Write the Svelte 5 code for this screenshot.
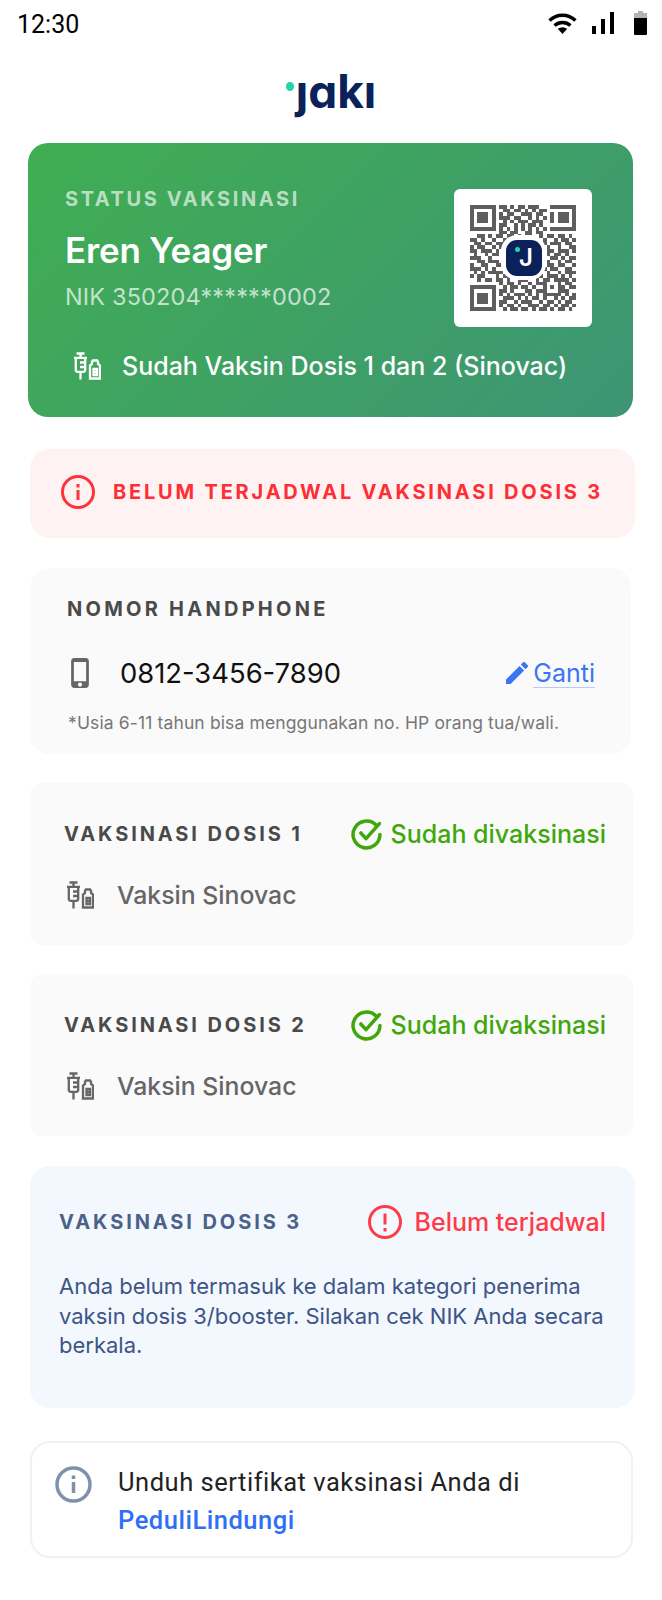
<script lang="ts">
  const doses = [{ title: "VAKSINASI DOSIS 1" }, { title: "VAKSINASI DOSIS 2" }];

  // rough copy of the qr modules, the middle is hidden by the logo
  const qrRows = [
    "11111110110101101110001111111",
    "10000010011011010101100000 01",
    "10111010101100111011001011101",
    "10111010111011001010101011101",
    "10111010010101110111001011101",
    "10000010110010101101000000 01",
    "11111110101010101010101111111",
    "00000000110110011011000000000",
    "00110101101101011001011011010",
    "11010010010110100110100101101",
    "01101101110000000001101110110",
    "10110010100000000000010010011",
    "11011101000000000000011011101",
    "01001011000000000000010110100",
    "11100100000000000000001101011",
    "00110111000000000000010010110",
    "10011001100000000000011011001",
    "11101010010000000001101100110",
    "01010111101101010110010010111",
    "10110001011010011101011101010",
    "00101101101001110010110111101",
    "00000000101101001011100010110",
    "11111110010110110100101011011",
    "10000010110100011011100011100",
    "10111010101011101010111110101",
    "10111010011101010110100101011",
    "10111010110010111001011010110",
    "10000010101101001110110101101",
    "11111110010110110101101011010",
  ];

  const qrCells = qrRows.flatMap((row, y) =>
    row.split("").map((c, x) => ({ x, y, on: c === "1" })).filter((c) => c.on),
  );
</script>

{#snippet vaccine()}
  <svg class="vaccine" viewBox="0 0 28 28" fill="none" stroke="currentColor" stroke-width="2.300">
    <path d="M3.500 1.500h8M7.500 1.500v4M1 5.800h13M2.800 5.800v12a2 2 0 0 0 2 2h5.400a2 2 0 0 0 2-2v-12M7.500 19.800v7.700M7 10.500h5M7 15h5" />
    <path d="M19 8.500h6M19 8.500v3.500l-2 1.500V26.500h10V13.500l-2-1.500V8.500M20.500 17h3.500v6h-3.500zM20.500 20h3.500" />
  </svg>
{/snippet}

{#snippet checkIcon()}
  <svg class="mark" viewBox="0 0 30 30" fill="none" stroke="#3fa70b" stroke-width="3.400" stroke-linecap="round" stroke-linejoin="round">
    <path d="M24.200 5.800A13 13 0 1 0 28 15" />
    <path d="M9.500 13.500l5 5.500L27.500 4.500" />
  </svg>
{/snippet}

<div class="page">
  <div class="statusbar">
    <span class="time">12:30</span>
    <div class="sys">
      <svg class="wifi" viewBox="0 0 29 21" fill="none" stroke="#000" stroke-width="3.400">
        <path d="M1.500 7.500c7.500-7 18.500-7 26 0" />
        <path d="M6.500 12.500c4.700-4 11.300-4 16 0" />
        <path d="M9.800 15.800c3-2 6.400-2 9.400 0L14.500 21z" fill="#000" stroke="none" />
      </svg>
      <svg class="signal" viewBox="0 0 22 22" fill="#000">
        <rect x="0" y="14" width="4" height="8" />
        <rect x="9" y="7" width="4" height="15" />
        <rect x="18" y="0" width="4" height="22" />
      </svg>
      <svg class="battery" viewBox="0 0 13 24">
        <path d="M4 0h5v2h4v6H0V2h4z" fill="#b3b3b3" />
        <path d="M0 7h13v16a1 1 0 0 1-1 1H1a1 1 0 0 1-1-1z" fill="#000" />
      </svg>
    </div>
  </div>

  <div class="logo-row">
    <div class="logo">
      <span class="logo-dot"></span>
      <span class="logo-text">ȷakı</span>
    </div>
  </div>

  <section class="vax-card">
    <div class="vax-top">
      <div>
        <div class="vax-label">STATUS VAKSINASI</div>
        <div class="vax-name">Eren Yeager</div>
        <div class="vax-nik">NIK 350204******0002</div>
      </div>
      <div class="qr">
        <svg viewBox="0 0 29 29" shape-rendering="crispEdges" fill="#5e5e5e">
          {#each qrCells as c}
            <rect x={c.x} y={c.y} width="1" height="1" />
          {/each}
        </svg>
        <div class="qr-ring">
          <div class="qr-logo">
            <span class="qr-dot"></span>
            <span class="qr-j">J</span>
          </div>
        </div>
      </div>
    </div>
    <div class="vax-bottom">
      {@render vaccine()}
      <span>Sudah Vaksin Dosis 1 dan 2 (Sinovac)</span>
    </div>
  </section>

  <section class="alert">
    <svg class="alert-icon" viewBox="0 0 34 34" fill="none" stroke="#ff3139" stroke-width="3">
      <circle cx="17" cy="17" r="15.500" />
      <path d="M17 15v10M17 9v3.500" />
    </svg>
    <span>BELUM TERJADWAL VAKSINASI DOSIS 3</span>
  </section>

  <section class="phone-card">
    <div class="head wide">NOMOR HANDPHONE</div>
    <div class="phone-row">
      <svg class="phone-icon" viewBox="5 1 13 22" fill="#666">
        <path d="M15.500 1h-8A2.500 2.500 0 0 0 5 3.500v17A2.500 2.500 0 0 0 7.500 23h8a2.500 2.500 0 0 0 2.500-2.500v-17A2.500 2.500 0 0 0 15.500 1zm-4 21c-.83 0-1.500-.67-1.500-1.500s.67-1.500 1.500-1.500 1.500.67 1.500 1.500-.67 1.500-1.500 1.500zm4.500-4H7V4h9v14z" />
      </svg>
      <span class="phone-num">0812-3456-7890</span>
      <span class="ganti">
        <svg viewBox="3 3 18 18" fill="#3b74f5">
          <path d="M3 17.250V21h3.750L17.810 9.940l-3.750-3.750L3 17.250zM20.710 7.040a1 1 0 0 0 0-1.410l-2.340-2.340a1 1 0 0 0-1.410 0l-1.830 1.830 3.750 3.750 1.830-1.830z" />
        </svg>
        <span class="ganti-link">Ganti</span>
      </span>
    </div>
    <p class="note">*Usia 6-11 tahun bisa menggunakan no. HP orang tua/wali.</p>
  </section>

  {#each doses as d}
    <section class="dose">
      <div class="dose-head">
        <span class="head">{d.title}</span>
        <span class="done">
          {@render checkIcon()}
          Sudah divaksinasi
        </span>
      </div>
      <div class="dose-vac">
        {@render vaccine()}
        <span>Vaksin Sinovac</span>
      </div>
    </section>
  {/each}

  <section class="dose3">
    <div class="dose-head">
      <span class="head blue">VAKSINASI DOSIS 3</span>
      <span class="pending">
        <svg class="mark" viewBox="0 0 34 34" fill="none" stroke="#ff3b47" stroke-width="3">
          <circle cx="17" cy="17" r="15.500" />
          <path d="M17 8.500v11M17 23v3.500" />
        </svg>
        Belum terjadwal
      </span>
    </div>
    <p>Anda belum termasuk ke dalam kategori penerima vaksin dosis 3/booster. Silakan cek NIK Anda secara berkala.</p>
  </section>

  <section class="info">
    <svg class="info-icon" viewBox="0 0 37 37" fill="none" stroke="#8091ae" stroke-width="3.500">
      <circle cx="18.500" cy="18.500" r="16.500" />
      <path d="M18.500 16v11M18.500 9.500v3.500" />
    </svg>
    <div class="info-text">
      Unduh sertifikat vaksinasi Anda di<br />
      <span class="info-link">PeduliLindungi</span>
    </div>
  </section>
</div>

<style>
  :global(body) {
    margin: 0;
    background: #fff;
  }

  .page {
    width: 662px;
    height: 1600px;
    overflow: hidden;
    font-family: Inter, "Noto Sans", sans-serif;
    color: #222;
  }

  .statusbar {
    height: 48px;
    display: flex;
    justify-content: space-between;
    align-items: center;
    padding: 0 15px 0 17px;
  }

  .time {
    font-family: Roboto, sans-serif;
    font-size: 25px;
    color: #000;
  }

  .sys {
    display: flex;
    align-items: center;
    gap: 15px;
    margin-top: -2px;
  }

  .wifi {
    width: 29px;
    height: 21px;
  }

  .signal {
    width: 22px;
    height: 22px;
  }

  .battery {
    width: 13px;
    height: 24px;
    margin-left: 5px;
  }

  .logo-row {
    height: 95px;
    display: flex;
    justify-content: center;
  }

  .logo {
    position: relative;
    padding: 13px 0 0 10px;
    height: 60px;
  }

  .logo-text {
    font-size: 46px;
    font-weight: 700;
    line-height: 60px;
    color: #0b2159;
    font-feature-settings: "cv11" 1;
  }

  .logo-dot {
    position: absolute;
    left: 0;
    top: 34px;
    width: 8px;
    height: 9px;
    border-radius: 50%;
    background: #1fd6a4;
  }

  .vax-card {
    margin: 0 29px 0 28px;
    height: 274px;
    box-sizing: border-box;
    padding: 46px 41px 0 37px;
    border-radius: 20px;
    background: linear-gradient(135deg, #40ae52, #3d9575);
    color: #fff;
  }

  .vax-top {
    display: flex;
    justify-content: space-between;
  }

  .vax-label {
    font-size: 20px;
    line-height: 20px;
    font-weight: 700;
    letter-spacing: 2.600px;
    color: rgba(255, 255, 255, 0.65);
  }

  .vax-name {
    margin-top: 20px;
    font-size: 35px;
    line-height: 42px;
    font-weight: 600;
    letter-spacing: -0.200px;
  }

  .vax-nik {
    margin-top: 12px;
    font-size: 23.500px;
    line-height: 28px;
    letter-spacing: 0.150px;
    color: rgba(255, 255, 255, 0.7);
  }

  .qr {
    position: relative;
    width: 138px;
    height: 138px;
    box-sizing: border-box;
    padding: 16px;
    border-radius: 6px;
    background: #fff;
  }

  .qr svg {
    display: block;
    width: 106px;
    height: 106px;
  }

  .qr-ring {
    position: absolute;
    left: 47px;
    top: 46px;
    width: 45px;
    height: 45px;
    border-radius: 16px;
    background: #fff;
    display: flex;
    align-items: center;
    justify-content: center;
  }

  .qr-logo {
    position: relative;
    width: 36px;
    height: 36px;
    border-radius: 11px;
    background: #0b2159;
    display: flex;
    align-items: center;
    justify-content: center;
  }

  .qr-dot {
    position: absolute;
    left: 9px;
    top: 7px;
    width: 5px;
    height: 5px;
    border-radius: 50%;
    background: #1fd6a4;
  }

  .qr-j {
    font-size: 24px;
    font-weight: 600;
    color: #fff;
    line-height: 1;
    margin-left: 5px;
  }

  .vaccine {
    width: 28px;
    height: 28px;
    flex: none;
  }

  .vax-bottom {
    margin-top: 24px;
    display: flex;
    align-items: center;
    gap: 21px;
    font-size: 25px;
    font-weight: 500;
    margin-left: 8px;
    white-space: nowrap;
  }

  .alert {
    margin: 32px 27px 0 30px;
    height: 89px;
    box-sizing: border-box;
    padding: 0 0 4px 31px;
    display: flex;
    align-items: center;
    gap: 18px;
    border-radius: 20px;
    background: #fef3f2;
    color: #ff2d35;
    font-size: 20px;
    font-weight: 700;
    letter-spacing: 2.800px;
    white-space: nowrap;
  }

  .alert-icon {
    width: 34px;
    height: 34px;
    flex: none;
  }

  .phone-card {
    margin: 30px 31px 0 30px;
    height: 186px;
    box-sizing: border-box;
    padding: 29px 36px 0 37px;
    border-radius: 20px;
    background: #fafafa;
  }

  .head {
    font-size: 20px;
    line-height: 24px;
    font-weight: 700;
    letter-spacing: 2.900px;
    color: #4a4a4a;
    white-space: nowrap;
  }

  .wide {
    letter-spacing: 3.250px;
  }

  .blue {
    color: #4a6288;
  }

  .phone-row {
    margin-top: 35px;
    display: flex;
    align-items: center;
  }

  .phone-icon {
    width: 18px;
    height: 30px;
    margin-left: 4px;
  }

  .phone-num {
    margin-left: 31px;
    font-size: 27.400px;
    color: #111;
  }

  .ganti {
    margin-left: auto;
    display: flex;
    align-items: center;
    gap: 5px;
    color: #3b74f5;
    font-size: 25px;
    line-height: 28px;
  }

  .ganti svg {
    width: 22px;
    height: 22px;
  }

  .ganti-link {
    border-bottom: 1px solid #b6cbfa;
  }

  .note {
    margin: 22px 0 0 1px;
    font-size: 17.500px;
    line-height: 22px;
    letter-spacing: 0.130px;
    color: #777;
    white-space: nowrap;
  }

  .dose {
    margin: 29px 29px 0 30px;
    height: 162px;
    box-sizing: border-box;
    padding: 36px 27px 0 34px;
    border-radius: 12px;
    background: #fafafa;
  }

  .dose-head {
    display: flex;
    justify-content: space-between;
    align-items: center;
    height: 30px;
  }

  .done,
  .pending {
    display: flex;
    align-items: center;
    gap: 9px;
    font-size: 25px;
    font-weight: 500;
    color: #3fa70b;
    white-space: nowrap;
  }

  .pending {
    gap: 13px;
    color: #ff3b47;
  }

  .mark {
    width: 31px;
    height: 31px;
    flex: none;
  }

  .pending .mark {
    width: 34px;
    height: 34px;
  }

  .dose-vac {
    margin-top: 31px;
    margin-left: 2px;
    display: flex;
    align-items: center;
    gap: 23px;
    color: #666;
    font-size: 24.800px;
    font-weight: 500;
  }

  .dose3 {
    margin: 30px 27px 0 30px;
    height: 242px;
    box-sizing: border-box;
    padding: 41px 29px 0 29px;
    border-radius: 20px;
    background: #f3f7fe;
  }

  .dose3 p {
    margin: 35px 0 0;
    font-size: 22px;
    line-height: 29.600px;
    color: #3d5585;
  }

  .info {
    margin: 33px 29px 0 30px;
    height: 117px;
    box-sizing: border-box;
    padding: 23px 0 0 23px;
    display: flex;
    gap: 26px;
    border: 2px solid #eef2f7;
    border-radius: 20px;
  }

  .info-icon {
    width: 37px;
    height: 37px;
    flex: none;
  }

  .info-text {
    font-family: Roboto, sans-serif;
    font-size: 25.500px;
    line-height: 38px;
    margin-top: -3px;
    color: #222;
    letter-spacing: 0.520px;
  }

  .info-link {
    color: #2f6ff5;
    font-weight: 500;
  }
</style>
